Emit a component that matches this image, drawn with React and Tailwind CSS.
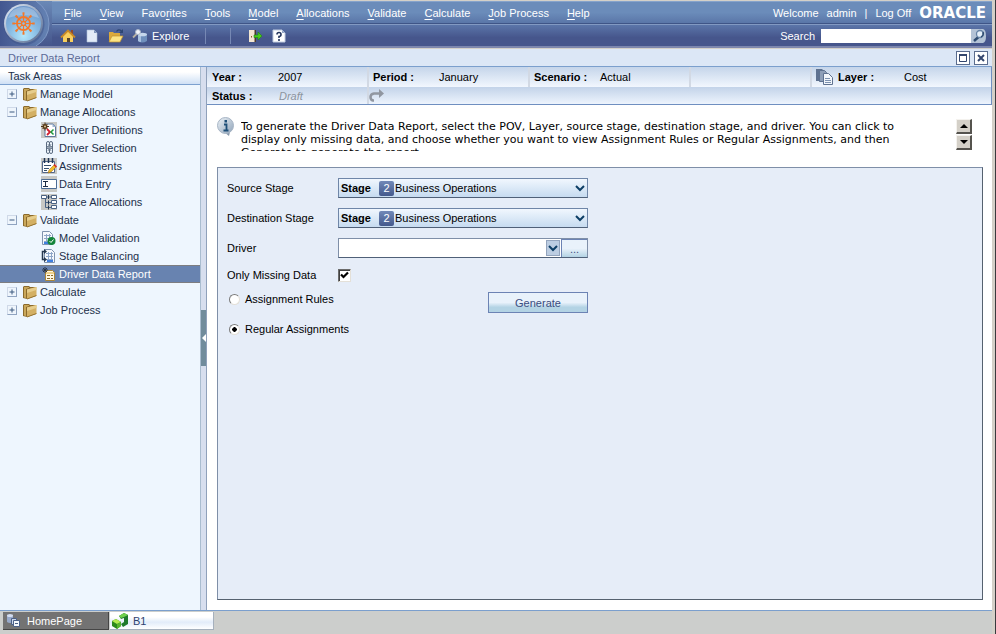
import React from "react";

const menus = [
  ["", "F", "ile"],
  ["", "V", "iew"],
  ["Favo", "r", "ites"],
  ["", "T", "ools"],
  ["", "M", "odel"],
  ["", "A", "llocations"],
  ["", "V", "alidate"],
  ["", "C", "alculate"],
  ["", "J", "ob Process"],
  ["", "H", "elp"],
];

const tasks = [
  { label: "Manage Model", open: false },
  {
    label: "Manage Allocations",
    open: true,
    items: [
      { label: "Driver Definitions", icon: DefinitionsIcon },
      { label: "Driver Selection", icon: SelectionIcon },
      { label: "Assignments", icon: AssignmentsIcon },
      { label: "Data Entry", icon: DataEntryIcon },
      { label: "Trace Allocations", icon: TraceIcon },
    ],
  },
  {
    label: "Validate",
    open: true,
    items: [
      { label: "Model Validation", icon: ValidationIcon },
      { label: "Stage Balancing", icon: BalancingIcon },
      { label: "Driver Data Report", icon: ReportIcon },
    ],
  },
  { label: "Calculate", open: false },
  { label: "Job Process", open: false },
];

function WheelLogo() {
  const spokes = [0, 45, 90, 135, 180, 225, 270, 315];
  return (
    <svg width="52" height="45" viewBox="0 0 52 45" className="shrink-0">
      <defs>
        <radialGradient id="orb" cx="50%" cy="85%" r="85%">
          <stop offset="0" stopColor="#b4e8fb" />
          <stop offset="0.5" stopColor="#86b9e2" />
          <stop offset="1" stopColor="#6c97cb" />
        </radialGradient>
        <linearGradient id="orbRim" x1="0" y1="0" x2="1" y2="1">
          <stop offset="0" stopColor="#e4eefa" />
          <stop offset="1" stopColor="#54698f" />
        </linearGradient>
        <linearGradient id="orbBack" x1="0" y1="0" x2="1" y2="0">
          <stop offset="0" stopColor="#435790" />
          <stop offset="1" stopColor="#6482b3" />
        </linearGradient>
      </defs>
      <path d="M0 0H36Q49 9 49 23T36 45H0Z" fill="url(#orbBack)" />
      <path d="M36 0Q49 9 49 23T36 45" fill="none" stroke="#7f99c6" />
      <circle cx="24" cy="23.500" r="20.500" fill="#3f5488" opacity="0.5" />
      <circle cx="23.500" cy="22.500" r="19.500" fill="url(#orbRim)" />
      <circle cx="23.500" cy="22.500" r="17.500" fill="url(#orb)" />
      <path d="M8 17Q12 6 23.500 6T39 17Q24 11 8 17Z" fill="#fff" opacity="0.25" />
      <g stroke="#f3782a" fill="none">
        <circle cx="23.500" cy="22.500" r="6.500" strokeWidth="1.800" />
        <circle cx="23.500" cy="22.500" r="2" strokeWidth="1.400" />
        {spokes.map((a) => (
          <g key={a} transform={`rotate(${a} 23.5 22.5)`}>
            <path d="M23.500 20.500V13" strokeWidth="1.200" />
            <path d="M22.500 12.500h2" strokeWidth="2.400" />
          </g>
        ))}
      </g>
    </svg>
  );
}

function HomeIcon() {
  return (
    <svg width="16" height="16" viewBox="0 0 16 16">
      <path d="M11 2h2v5h-2z" fill="#8f4a2c" />
      <path d="M3 8l5-5 5 5v6H3z" fill="#f8cf5e" />
      <path d="M1 9.500L8 2.500l7 7" fill="none" stroke="#c88a28" strokeWidth="1.800" />
      <path d="M7 10h3v4H7z" fill="#56442a" />
    </svg>
  );
}

function PageIcon() {
  return (
    <svg width="16" height="16" viewBox="0 0 16 16">
      <path d="M3 2h7l3 3v9H3z" fill="#e3ebf7" stroke="#b0bfd8" strokeWidth="0.600" />
      <path d="M10 2v3h3z" fill="#8298bd" />
    </svg>
  );
}

function OpenIcon() {
  return (
    <svg width="16" height="16" viewBox="0 0 16 16">
      <path d="M1 4h4l1 1h6v4H5l-4 5z" fill="#dba93c" />
      <path d="M4 8h11l-3 6H1z" fill="#fbe384" stroke="#c1902c" strokeWidth="0.700" />
      <path d="M8.500 3.500q2-3 5-.5" fill="none" stroke="#2c4573" strokeWidth="1.300" />
      <path d="M15 1v4h-4z" fill="#2c4573" />
    </svg>
  );
}

function ExploreIcon() {
  return (
    <svg width="16" height="16" viewBox="0 0 16 16">
      <path d="M6 7v6q4 3 9 0V6z" fill="#6f8fbc" />
      <path d="M6 7v6q1 1 3 1V8z" fill="#a9c1e0" />
      <ellipse cx="10.500" cy="6.500" rx="4.500" ry="1.800" fill="#c6d7ec" />
      <path d="M5 5.500L1 9.500" stroke="#b9b2a4" strokeWidth="1.800" />
      <circle cx="6" cy="4" r="2.500" fill="#f1f4fa" stroke="#a8b4c8" />
    </svg>
  );
}

function ExitIcon() {
  return (
    <svg width="16" height="16" viewBox="0 0 16 16">
      <path d="M2 2h7v12H2z" fill="#4d3a2a" />
      <path d="M2 2h5.500v12H2z" fill="#f3e6d2" />
      <path d="M4 8h1v1.500H4z" fill="#8a5a2a" />
      <path d="M7 7h4V4l4 4-4 4V9.500H7z" fill="#48c81c" stroke="#1f8a10" strokeWidth="0.600" />
    </svg>
  );
}

function HelpIcon() {
  return (
    <svg width="16" height="16" viewBox="0 0 16 16">
      <path d="M2 2h9l3 3v9H2z" fill="#fff" stroke="#c2cde0" />
      <path d="M11 2v3h3z" fill="#93a6c6" />
      <path d="M6 6.500q0-2 2-2t2 2-2 2V10M8 11v2" fill="none" stroke="#24355c" strokeWidth="1.600" />
    </svg>
  );
}

function SearchIcon() {
  return (
    <svg width="16" height="14" viewBox="0 0 16 14">
      <path d="M0 0h12q3 1 3 7t-3 7H0z" fill="#b4c3d6" />
      <path d="M8 7.500L3 12" stroke="#2e4b70" strokeWidth="2.500" />
      <circle cx="9" cy="5" r="3.500" fill="#e6f0fa" stroke="#6683a6" strokeWidth="1.300" />
      <path d="M12 3q1 3-2 5" fill="none" stroke="#2e4b70" strokeWidth="1.500" />
    </svg>
  );
}

function FolderIcon() {
  return (
    <svg width="16" height="16" viewBox="0 0 16 16" className="shrink-0">
      <path d="M1 3l1-1h5l1 1h6v9l-9 3-4-1z" fill="#8b6a2c" />
      <path d="M2 3h5v1L4 5v9l-2-.5z" fill="#c9a75a" />
      <path d="M5 5.500L14.500 3v8.500L5 15z" fill="#d3b064" />
      <path d="M5 5.500L14.500 3v3L5 9z" fill="#e6cd8c" />
      <path d="M5 15l9.500-3.500" stroke="#9a7630" />
    </svg>
  );
}

function DefinitionsIcon() {
  return (
    <svg width="16" height="16" viewBox="0 0 16 16">
      <path d="M0 0h16v16H0z" fill="#c8c8c4" />
      <path d="M4 2h8l2.500 2.500V14.500H4z" fill="#fff" stroke="#5d779c" />
      <path d="M11.500 1.500V5H15z" fill="#9db4d0" />
      <circle cx="4" cy="4.500" r="2.500" fill="#6b4a20" />
      <path d="M4 .5v8M0 4.500h8M1.500 2l5 5M6.500 2l-5 5" stroke="#4e3518" />
      <circle cx="4" cy="4.500" r="1" fill="#e4c89a" />
      <path d="M6 7l3 3-3 3" fill="none" stroke="#d02030" strokeWidth="1.800" />
      <path d="M12.500 7.500l-2.500 2.500 2.500 2.500" fill="none" stroke="#1c9a3c" strokeWidth="1.500" />
    </svg>
  );
}

function SelectionIcon() {
  return (
    <svg width="16" height="16" viewBox="0 0 16 16">
      <g fill="none" stroke="#5a6b80">
        <rect x="5.500" y="1.500" width="3" height="7" rx="1.500" />
        <rect x="8.500" y="1.500" width="3" height="7" rx="1.500" />
        <rect x="5.500" y="6.500" width="3" height="7" rx="1.500" />
        <rect x="8.500" y="6.500" width="3" height="7" rx="1.500" />
      </g>
      <path d="M7 4l3 7M10 4l-3 7" stroke="#8b99aa" />
    </svg>
  );
}

function AssignmentsIcon() {
  return (
    <svg width="16" height="16" viewBox="0 0 16 16">
      <path d="M0 0h16v16H0z" fill="#c8c8c4" />
      <path d="M1.500 3.500h12v11h-12z" fill="#fff" stroke="#53688c" />
      <path d="M3.500 0v5M7.500 0v5M11.500 0v5" stroke="#1f3454" strokeWidth="1.500" />
      <path d="M3 7.500h7M3 10.500h5M3 12.500h3" stroke="#37506e" />
      <path d="M13 7l2 2-5 5-3 1 1-3z" fill="#f2bd28" stroke="#9a6410" strokeWidth="0.500" />
      <path d="M13.500 6L16 8.500l-1 1L12.500 7z" fill="#d22" />
    </svg>
  );
}

function DataEntryIcon() {
  return (
    <svg width="16" height="16" viewBox="0 0 16 16">
      <path d="M0 0h16v16H0z" fill="#c8c8c4" />
      <path d="M.5 3.500h15v9H.5z" fill="#fff" stroke="#4d6c95" />
      <path d="M2 5.500h5M4.500 5v6M2 10.500h5" stroke="#1c2c44" />
    </svg>
  );
}

function TraceIcon() {
  return (
    <svg width="16" height="16" viewBox="0 0 16 16">
      <path d="M0 0h16v16H0z" fill="#c8c8c4" />
      <g fill="#fff" stroke="#4a6384">
        <path d="M.5 1.500h5v3h-5zM10.500 1.500h5v3h-5zM10.500 6.500h5v3h-5zM10.500 11.500h5v3h-5z" />
        <path d="M6 3h4M4.500 5v8.500H10M4.500 8.500H10" fill="none" />
      </g>
      <path d="M7.500 1v4M7.500 6.500v4M7.500 11.500v4" stroke="#22364f" />
    </svg>
  );
}

function SheetGrid() {
  return (
    <g>
      <path d="M3.500 1.500h7l3 3v10h-10z" fill="#f5f8fc" stroke="#7f93ae" />
      <path d="M5 5.500h7M5 8.500h7M5 11.500h7M7.500 4v8M10.500 4v8" stroke="#8da6c8" />
    </g>
  );
}

function ValidationIcon() {
  return (
    <svg width="16" height="16" viewBox="0 0 16 16">
      <g transform="translate(-2 0)">
        <SheetGrid />
        <path d="M5 12h5v2H5z" fill="#3f7fe0" />
      </g>
      <circle cx="10.500" cy="11" r="4" fill="#14853a" />
      <path d="M8.500 11l1.500 1.500 2.500-3" fill="none" stroke="#fff" />
    </svg>
  );
}

function BalancingIcon() {
  return (
    <svg width="16" height="16" viewBox="0 0 16 16">
      <SheetGrid />
      <path d="M6 12h6v2H6z" fill="#3f7fe0" />
      <path d="M4 3.500H1.500v8H4" fill="none" stroke="#26384f" strokeWidth="1.500" />
      <path d="M3 1l3 2.500L3 6zM3 9l3 2.500L3 14z" fill="#26384f" />
    </svg>
  );
}

function ReportIcon() {
  return (
    <svg width="16" height="16" viewBox="0 0 16 16">
      <path d="M4.500 4.500h7l2 2v8h-9z" fill="#fff7e0" stroke="#a9853a" />
      <path d="M5 6h8v2H5z" fill="#eed08a" />
      <path d="M6 9.500h3M10 9.500h2M6 12.500h3M10 12.500h2" stroke="#8d6a28" />
      <path d="M4 1v6M1 4h6M2 2l4 4M6 2L2 6" stroke="#29354b" />
    </svg>
  );
}

function Chevron() {
  return (
    <svg width="10" height="7" viewBox="0 0 10 7" className="pointer-events-none shrink-0">
      <path d="M1 1l4 4 4-4" fill="none" stroke="#0d3e66" strokeWidth="2" />
    </svg>
  );
}

function Header() {
  return (
    <header className="flex border-t border-[#d4d0c8] bg-[#46568c]">
      <div className="flex h-[47px] flex-1 border-b-2 border-[#7d87ae] text-white">
        <div className="w-[52px] bg-gradient-to-b from-[#6a89b7] to-[#46568c]">
          <WheelLogo />
        </div>
        <div className="flex min-w-0 flex-1 flex-col">
          <div className="flex h-[23px] items-center justify-between border-y border-t-[#86a3cb] border-b-[#3f5587] bg-gradient-to-b from-[#6b8cba] from-50% to-[#5a76a8] pr-1.5">
            <nav className="flex gap-[18px] pl-3">
              {menus.map(([before, key, after]) => (
                <button key={before + key + after} type="button" className="whitespace-nowrap hover:text-blue-100">
                  {before}
                  <span className="underline underline-offset-2">{key}</span>
                  {after}
                </button>
              ))}
            </nav>
            <div className="flex items-center whitespace-nowrap">
              <span>Welcome</span>
              <span className="ml-2">admin</span>
              <span className="mx-2">|</span>
              <a href="#logoff">Log Off</a>
              <span className="ml-2 font-['DejaVu_Sans',sans-serif] text-[15px] font-bold">ORACLE</span>
            </div>
          </div>
          <div className="flex flex-1 items-center justify-between border-t border-[#8299c2] bg-gradient-to-b from-[#5b75a9] to-[#46568c] to-60% pr-[5px]">
            <div className="flex items-center gap-2 pl-2">
              <button type="button" aria-label="Home"><HomeIcon /></button>
              <button type="button" aria-label="New"><PageIcon /></button>
              <button type="button" aria-label="Open"><OpenIcon /></button>
              <button type="button" className="flex items-center gap-1">
                <ExploreIcon />
                Explore
              </button>
              <span className="ml-2 h-4 w-px bg-[#7688b4]" />
              <span className="ml-4 h-4 w-px bg-[#7688b4]" />
              <button type="button" aria-label="Exit" className="ml-2"><ExitIcon /></button>
              <button type="button" aria-label="Help"><HelpIcon /></button>
            </div>
            <form className="flex items-center" onSubmit={(e) => e.preventDefault()}>
              <label htmlFor="search" className="mr-1.5">Search</label>
              <input id="search" type="text" className="h-3.5 w-[150px] bg-white px-1 text-black outline-none" />
              <button type="submit" aria-label="Run search"><SearchIcon /></button>
            </form>
          </div>
        </div>
      </div>
    </header>
  );
}

function TitleBar() {
  return (
    <div className="flex h-[19px] items-center justify-between border-t border-b border-t-[#d4d0c8] border-b-[#7b9fcd] bg-[#dce7f6] pr-1 pl-2 text-[#5d6b98]">
      <h1>Driver Data Report</h1>
      <div className="flex gap-1">
        <button type="button" aria-label="Maximize" className="flex size-3.5 items-center justify-center border border-[#5a6c8e] bg-white">
          <svg width="8" height="8" viewBox="0 0 8 8">
            <path d="M.5 1h7v6.500h-7z" fill="none" stroke="#33466e" />
            <path d="M0 1h8" stroke="#33466e" strokeWidth="2" />
          </svg>
        </button>
        <button type="button" aria-label="Close" className="flex size-3.5 items-center justify-center border border-[#5a6c8e] bg-white">
          <svg width="8" height="8" viewBox="0 0 8 8">
            <path d="M1 1l6 6M7 1L1 7" stroke="#33466e" strokeWidth="2" />
          </svg>
        </button>
      </div>
    </div>
  );
}

function Toggle({ open }) {
  return (
    <span className="flex size-[10px] shrink-0 items-center justify-center border border-[#cfd9e8] border-r-[#8fa3c0] border-b-[#8fa3c0] bg-[#eef5fc]">
      <svg width="6" height="6" viewBox="0 0 6 6">
        <path d={open ? "M.5 3h5" : "M.5 3h5M3 .5v5"} stroke="#3d5a80" />
      </svg>
    </span>
  );
}

function Sidebar() {
  return (
    <aside className="flex w-[201px] shrink-0 flex-col border-r border-[#a9bccf] bg-[#eef6fe] text-[#22304a]">
      <h2 className="flex h-[18px] items-center border-b border-[#7ba0cf] bg-gradient-to-b from-white from-30% to-[#cfe0f5] pl-2">
        Task Areas
      </h2>
      <ul>
        {tasks.map((group) => (
          <li key={group.label}>
            <button type="button" aria-expanded={group.open} className="flex h-[18px] w-full items-center pl-[7px]">
              <Toggle open={group.open} />
              <span className="mr-0.5 ml-[5px]"><FolderIcon /></span>
              {group.label}
            </button>
            {group.items && (
              <ul>
                {group.items.map(({ label, icon: Icon }) => (
                  <li key={label}>
                    <a
                      href="#task"
                      className={
                        label === "Driver Data Report"
                          ? "flex h-[18px] items-center gap-0.5 border-y border-[#7d7d80] bg-[#6883b0] pl-[41px] text-white"
                          : "flex h-[18px] items-center gap-0.5 pl-[41px]"
                      }
                    >
                      <Icon />
                      {label}
                    </a>
                  </li>
                ))}
              </ul>
            )}
          </li>
        ))}
      </ul>
    </aside>
  );
}

function PovCell({ label, value, icon }) {
  return (
    <div className="flex items-center border-l-2 border-[#d2d9e4] pl-1 first:border-l-0 first:pl-[5px]">
      {icon}
      {label && <span className="w-[66px] font-bold text-black">{label}</span>}
      <span className="text-black">{value}</span>
    </div>
  );
}

function PovBar() {
  return (
    <section className="border-r border-b border-[#6f8fc0]">
      <div className="grid h-5 grid-cols-[160px_161px_161px_121px_1fr] bg-gradient-to-b from-[#c5d5ea] to-[#f2f7fe]">
        <PovCell label="Year :" value="2007" />
        <PovCell label="Period :" value="January" />
        <PovCell label="Scenario :" value="Actual" />
        <PovCell />
        <PovCell
          label="Layer :"
          value="Cost"
          icon={
            <svg width="18" height="16" viewBox="0 0 18 16" className="mr-1 shrink-0">
              <path d="M0 0h6l2 2v10H0z" fill="#5f7290" />
              <path d="M3.500 1.500h5l2 2v9h-7z" fill="#8e9fb8" stroke="#5f7290" />
              <path d="M7.500 4.500h5l4 4v7h-9z" fill="#f2f6fb" stroke="#5f7290" />
              <path d="M9 9.500h5M9 11.500h6M9 13.500h6" stroke="#7d92b0" />
            </svg>
          }
        />
      </div>
      <div className="grid h-[17px] grid-cols-[160px_1fr] bg-gradient-to-b from-[#c3d3e9] to-[#edf4fd]">
        <div className="flex items-center pl-[5px]">
          <span className="w-[67px] font-bold text-black">Status :</span>
          <span className="text-[#8d949e] italic">Draft</span>
        </div>
        <div className="flex items-center border-l-2 border-[#d2d9e4]">
          <svg width="16" height="14" viewBox="0 0 16 14">
            <path d="M5 11.500H4Q1.500 11 1.500 8T5 4.500H11" fill="none" stroke="#9096a0" strokeWidth="2.500" />
            <path d="M10 0l5 4.500-5 4.500z" fill="#9096a0" />
          </svg>
        </div>
      </div>
    </section>
  );
}

function ScrollButton({ label, points }) {
  return (
    <button
      type="button"
      aria-label={label}
      className="flex h-[15px] w-4 items-center justify-center border border-r-2 border-b-2 border-[#f4f2ee] border-r-[#55534e] border-b-[#55534e] bg-[#d4d0c8]"
    >
      <svg width="8" height="4" viewBox="0 0 8 4">
        <polygon points={points} fill="#000" />
      </svg>
    </button>
  );
}

function InfoText() {
  return (
    <section className="flex h-[62px] shrink-0 items-start pt-3 pr-5 pl-2.5">
      <svg width="18" height="20" viewBox="0 0 18 20" className="shrink-0">
        <defs>
          <linearGradient id="bubble" x1="0" y1="0" x2="1" y2="1">
            <stop offset="0" stopColor="#eef3f8" />
            <stop offset="1" stopColor="#8fa3b9" />
          </linearGradient>
        </defs>
        <path d="M7 15h6l-1 4z" fill="#8596aa" />
        <circle cx="8.500" cy="8.500" r="8" fill="url(#bubble)" stroke="#a7b5c5" />
        <path d="M7 7.500h2.500V13M6.500 13.500h5" fill="none" stroke="#1e4f78" strokeWidth="1.800" />
        <path d="M7.500 3h2.500v2.500H7.500z" fill="#1e4f78" />
      </svg>
      <div className="ml-1.5 h-[34px] flex-1 overflow-hidden pt-[3px] font-['DejaVu_Sans',Verdana,sans-serif] text-[11px] leading-[13px] text-black">
        <p className="max-w-[670px]">
          To generate the Driver Data Report, select the POV, Layer, source stage, destination stage, and driver. You can
          click to display only missing data, and choose whether you want to view Assignment Rules or Regular
          Assignments, and then Generate to generate the report.
        </p>
      </div>
      <div className="flex flex-col gap-px pt-0.5">
        <ScrollButton label="Scroll up" points="4,0 8,4 0,4" />
        <ScrollButton label="Scroll down" points="0,0 8,0 4,4" />
      </div>
    </section>
  );
}

function StageSelect({ id }) {
  return (
    <div className="flex h-5 items-center border border-[#6f86a8] border-b-[#4f6078] bg-gradient-to-b from-[#f1f7fe] to-[#c6dbf0] px-0.5 text-black">
      <span className="w-[38px] font-bold">Stage</span>
      <span className="flex size-[15px] items-center justify-center rounded-xs bg-gradient-to-b from-[#7189b8] to-[#45598c] text-white">
        2
      </span>
      <select id={id} className="min-w-0 flex-1 appearance-none bg-transparent pl-px outline-none">
        <option>Business Operations</option>
      </select>
      <Chevron />
    </div>
  );
}

function KindRadio({ label, checked, onChange }) {
  return (
    <label className="flex items-center gap-[5px]">
      <input
        type="radio"
        name="kind"
        checked={checked}
        onChange={onChange}
        className="ml-0.5 size-[11px] appearance-none rounded-full border border-[#7a7a7a] border-r-[#e4e0d8] border-b-[#e4e0d8] bg-white checked:bg-[radial-gradient(#000_2px,#fff_2.5px)]"
      />
      {label}
    </label>
  );
}

function ReportForm() {
  const [kind, setKind] = React.useState("regular");
  const [onlyMissing, setOnlyMissing] = React.useState(true);

  return (
    <form
      onSubmit={(e) => e.preventDefault()}
      className="mr-[9px] mb-2.5 ml-2.5 flex-1 border border-[#7f8fa8] border-r-[#55616f] border-b-[#55616f] bg-[#e6edf8] px-[9px] pt-2.5 text-black"
    >
      <div className="grid w-[361px] grid-cols-[111px_1fr] items-center gap-y-2.5">
        <label htmlFor="source">Source Stage</label>
        <StageSelect id="source" />
        <label htmlFor="destination">Destination Stage</label>
        <StageSelect id="destination" />
        <label htmlFor="driver">Driver</label>
        <div className="flex h-5 border border-[#7f8fa8] border-b-[#4f6078] bg-white">
          <input id="driver" type="text" className="min-w-0 flex-1 px-1 outline-none" />
          <button
            type="button"
            aria-label="Show drivers"
            className="m-px flex w-3.5 items-center justify-center border border-[#93a4bd] bg-[#bccde2]"
          >
            <Chevron />
          </button>
          <button
            type="button"
            className="w-[26px] border-t border-l border-[#6c83b4] bg-gradient-to-b from-[#e9f2fb] from-50% to-[#b3d3e4] text-[#3f5285]"
          >
            ...
          </button>
        </div>
      </div>
      <div className="grid w-[361px] grid-cols-[111px_1fr] items-center pt-2.5">
        <label htmlFor="missing">Only Missing Data</label>
        <input
          id="missing"
          type="checkbox"
          checked={onlyMissing}
          onChange={(e) => setOnlyMissing(e.target.checked)}
          className="peer col-start-2 row-start-1 size-[13px] appearance-none border border-[#6b6b6b] border-r-[#e4e0d8] border-b-[#e4e0d8] bg-white shadow-[inset_1px_1px_0_#404040]"
        />
        <svg width="13" height="13" viewBox="0 0 13 13" className="pointer-events-none invisible col-start-2 row-start-1 peer-checked:visible">
          <path d="M3 5.500l2.500 2.500L10 3.500" fill="none" stroke="#000" strokeWidth="2.200" />
        </svg>
      </div>
      <div className="flex w-[361px] items-start justify-between pt-2.5">
        <fieldset className="flex flex-col gap-4">
          <KindRadio label="Assignment Rules" checked={kind === "rules"} onChange={() => setKind("rules")} />
          <KindRadio label="Regular Assignments" checked={kind === "regular"} onChange={() => setKind("regular")} />
        </fieldset>
        <button
          type="submit"
          className="h-[21px] w-[100px] border border-[#6c83b4] bg-gradient-to-b from-[#e9f2fb] from-50% to-[#b3d3e4] to-75% text-[#3a4c80]"
        >
          Generate
        </button>
      </div>
    </form>
  );
}

function TabBar() {
  return (
    <footer className="flex h-6 shrink-0 items-start gap-px border-t border-[#7b9fcd] bg-[#cccecc] pt-px pl-[3px]">
      <button type="button" className="flex h-[18px] w-[106px] items-center gap-1.5 border-r border-b border-[#454545] bg-[#737373] pl-[3px] text-white">
        <svg width="15" height="15" viewBox="0 0 15 15">
          <path d="M1 2v7q3 2 6 0V2z" fill="#98aacb" />
          <ellipse cx="4" cy="2.500" rx="3" ry="1.500" fill="#d3ddf0" />
          <path d="M5.500 5.500h5v6h-5z" fill="#c9d6ea" stroke="#4c6187" />
          <path d="M7.500 7.500h6v6h-6z" fill="#f3f7fc" stroke="#4c6187" />
          <path d="M9 10.500h3" stroke="#4c6187" />
        </svg>
        HomePage
      </button>
      <button type="button" className="flex h-[18px] w-[104px] items-center gap-1 border-r border-b border-[#a5b0bd] bg-gradient-to-b from-white from-30% via-[#e2ecf9] via-60% to-white pl-0.5 text-[#2d4270]">
        <svg width="17" height="16" viewBox="0 0 17 16">
          <path d="M0 8l4-2 5 3v4l-4 3-5-3z" fill="#2c8a1c" />
          <path d="M0 8l4-2 5 3-4 2z" fill="#b4ea50" />
          <path d="M7 3l5-3 4 2v9l-5 3-2-3 3-2V5L9 6z" fill="#1f7a2c" />
          <path d="M7 3l5-3 4 2-4 2-3 1z" fill="#6fd04c" />
          <path d="M5 11l4-2v4l-4 3z" fill="#56b52c" />
        </svg>
        B1
      </button>
    </footer>
  );
}

export default function App() {
  return (
    <div className="flex h-screen border-r border-[#3a3a3e] bg-[#d4d0c8] pr-[3px] font-['Liberation_Sans',Arial,sans-serif] text-[11px] leading-[14px]">
      <div className="flex min-w-0 flex-1 flex-col">
        <Header />
        <TitleBar />
        <div className="flex min-h-0 flex-1 bg-white">
          <Sidebar />
          <div className="flex w-[6px] shrink-0 flex-col border-r border-[#8fa0ba] bg-[#d7deee] pt-[243px]">
            <button type="button" aria-label="Collapse task areas" className="flex h-14 w-full items-center justify-end bg-[#718c9c]">
              <svg width="4" height="8" viewBox="0 0 4 8">
                <polygon points="4,0 4,8 0,4" fill="#fff" />
              </svg>
            </button>
          </div>
          <main className="flex min-w-0 flex-1 flex-col">
            <PovBar />
            <InfoText />
            <ReportForm />
          </main>
        </div>
        <TabBar />
      </div>
    </div>
  );
}
